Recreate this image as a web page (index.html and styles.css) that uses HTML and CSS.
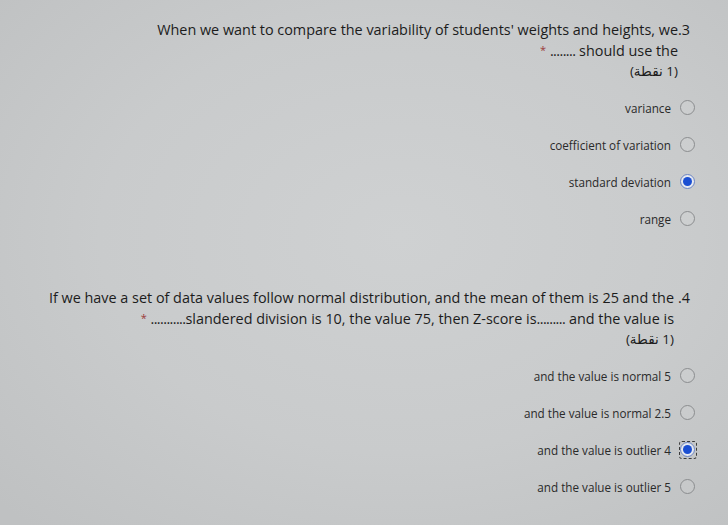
FILE: index.html
```html
<!DOCTYPE html>
<html lang="en" dir="rtl">
<head>
<meta charset="utf-8">
<title>Form</title>
<link rel="stylesheet" href="styles.css">
</head>
<body>
<main class="form">
  <section class="question q3">
    <div class="title">
      <span class="num">3.</span>
      <div class="text">
        <div>When we want to compare the variability of students' weights and heights, we</div>
        <div>should use the <span class="dots">........</span> <span class="req">*</span></div>
        <div class="points">(1 نقطة)</div>
      </div>
    </div>
    <ul class="options">
      <li class="option"><span class="radio"></span><span class="label">variance</span></li>
      <li class="option"><span class="radio"></span><span class="label">coefficient of variation</span></li>
      <li class="option"><span class="radio checked"></span><span class="label">standard deviation</span></li>
      <li class="option"><span class="radio"></span><span class="label">range</span></li>
    </ul>
  </section>
  <section class="question q4">
    <div class="title">
      <span class="num wide">4.</span>
      <div class="text">
        <div>If we have a set of data values follow normal distribution, and the mean of them is 25 and the</div>
        <div>slandered division is 10, the value 75, then Z-score is<span class="dots">.........</span> and the value is<span class="dots">...........</span> <span class="req">*</span></div>
        <div class="points">(1 نقطة)</div>
      </div>
    </div>
    <ul class="options">
      <li class="option"><span class="radio"></span><span class="label">and the value is normal 5</span></li>
      <li class="option"><span class="radio"></span><span class="label">and the value is normal 2.5</span></li>
      <li class="option"><span class="focus"><span class="radio checked"></span></span><span class="label">and the value is outlier 4</span></li>
      <li class="option"><span class="radio"></span><span class="label">and the value is outlier 5</span></li>
    </ul>
  </section>
</main>
</body>
</html>
```

FILE: styles.css
```css
html, body {
  margin: 0;
  padding: 0;
  height: 100%;
}
body {
  background: radial-gradient(ellipse 75% 75% at 55% 45%, #cfd1d2 0%, #c9cbcc 55%, #bfc1c2 100%);
  font-family: "Open Sans", "DejaVu Sans", sans-serif;
  color: #1c1c1c;
  overflow: hidden;
}
.form {
  padding: 20px 0 0 0;
}
.question {
  padding-right: 38px;
}
.q4 {
  margin-top: 51px;
}
.title {
  display: flex;
  flex-direction: row;
  font-size: 14.4px;
  line-height: 20px;
}
.num {
  flex: none;
  width: 12px;
  text-align: right;
}
.num.wide {
  width: 16px;
}
.text {
  text-align: right;
}
.dots {
  letter-spacing: -0.6px;
}
.req {
  color: #9a3a3a;
  font-size: 11px;
  vertical-align: 2px;
}
.points {
  font-size: 13.5px;
}
.options {
  list-style: none;
  margin: 8px 0 0 0;
  padding: 0 33px 0 0;
  position: relative;
  right: -38px;
}
.option {
  height: 37px;
  display: flex;
  align-items: center;
  gap: 9px;
  font-size: 11.7px;
  color: #2a2a2a;
}
.radio {
  box-sizing: border-box;
  flex: none;
  width: 15px;
  height: 15px;
  border-radius: 50%;
  border: 1px solid #8b8d8f;
  background: rgba(255,255,255,0.08);
  display: flex;
  align-items: center;
  justify-content: center;
}
.radio.checked {
  border: 1.5px solid #6b84c2;
  background: #e6e9f0;
}
.radio.checked::after {
  content: "";
  width: 9px;
  height: 9px;
  border-radius: 50%;
  background: #1b4fd2;
}
.focus {
  box-sizing: border-box;
  flex: none;
  width: 18px;
  height: 18px;
  border: 1.5px dashed #3a3a3a;
  border-radius: 3px;
  display: flex;
  align-items: center;
  justify-content: center;
  margin-left: -1.5px;
  margin-right: -1.5px;
}
```
